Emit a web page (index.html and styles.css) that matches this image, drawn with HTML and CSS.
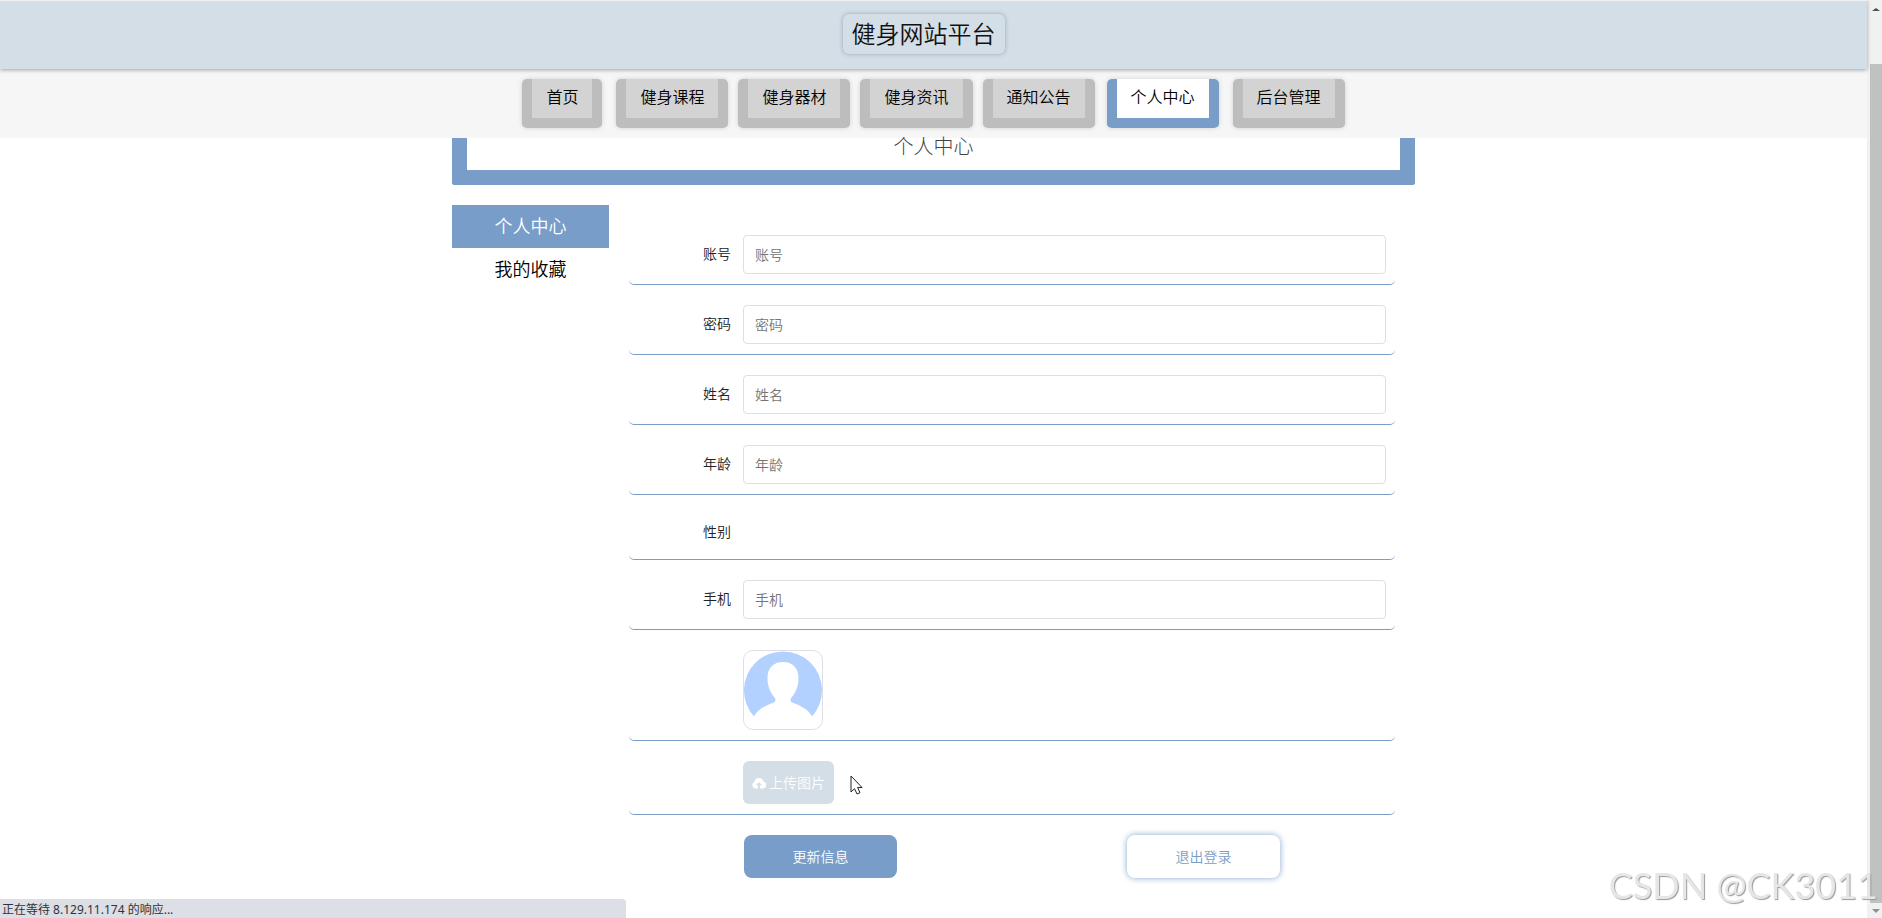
FILE: index.html
```
<!DOCTYPE html>
<html lang="zh-CN">
<head>
    <meta charset="UTF-8">
    <meta name="viewport" content="width=device-width, initial-scale=1.0">
    <title>个人中心</title>
    <link rel="stylesheet" href="styles.css">
</head>
<body>
    <div class="page">
        <header class="header">
            <h1 class="logo">健身网站平台</h1>
        </header>
        <nav class="nav">
            <a class="nav-item first" href="#">首页</a>
            <a class="nav-item" href="#">健身课程</a>
            <a class="nav-item" href="#">健身器材</a>
            <a class="nav-item" href="#">健身资讯</a>
            <a class="nav-item" href="#">通知公告</a>
            <a class="nav-item active" href="#">个人中心</a>
            <a class="nav-item" href="#">后台管理</a>
        </nav>

        <main class="container">
            <h2 class="banner">个人中心</h2>
            <div class="center">
                <div class="side">
                    <a class="side-item active" href="#">个人中心</a>
                    <a class="side-item" href="#">我的收藏</a>
                </div>
                <form class="form">
                    <div class="row">
                        <label class="label" for="account">账号</label>
                        <input class="input" type="text" id="account" placeholder="账号">
                    </div>
                    <div class="row">
                        <label class="label" for="password">密码</label>
                        <input class="input" type="password" id="password" placeholder="密码">
                    </div>
                    <div class="row">
                        <label class="label" for="name">姓名</label>
                        <input class="input" type="text" id="name" placeholder="姓名">
                    </div>
                    <div class="row">
                        <label class="label" for="age">年龄</label>
                        <input class="input" type="text" id="age" placeholder="年龄">
                    </div>
                    <div class="row row-gender">
                        <span class="label">性别</span>
                    </div>
                    <div class="row">
                        <label class="label" for="phone">手机</label>
                        <input class="input" type="text" id="phone" placeholder="手机">
                    </div>
                    <div class="row">
                        <span class="label"></span>
                        <div class="avatar">
                            <svg viewBox="0 0 78 78" width="78" height="78">
                                <path fill="#b3d1ff" d="M10 65.500A39 39 0 1 1 68 65.500C64 58 56 54.500 49.500 52C46.500 50.800 45.500 49 47.500 46.500C52 41 54.500 35 54.500 27C54.500 17 48.500 11 39 11C29.500 11 23.500 17 23.500 27C23.500 35 26 41 30.500 46.500C32.500 49 31.500 50.800 28.500 52C22 54.500 14 58 10 65.500Z"/>
                            </svg>
                        </div>
                    </div>
                    <div class="row">
                        <span class="label"></span>
                        <button class="upload" type="button">
                            <svg viewBox="0 0 14 12" width="14" height="12">
                                <path fill="#fff" fill-rule="evenodd" d="M3.600 11.500A3.400 3.400 0 0 1 2.300 5A4.700 4.700 0 0 1 11.600 4.800A3.400 3.400 0 0 1 10.500 11.500H8V8.200H10L7 5L4 8.200H6V11.500Z"/>
                            </svg>
                            <span>上传图片</span>
                        </button>
                    </div>
                    <div class="actions">
                        <div class="action"><button class="btn btn-update" type="submit">更新信息</button></div>
                        <div class="action"><button class="btn btn-logout" type="button">退出登录</button></div>
                    </div>
                </form>
            </div>
        </main>
    </div>

    <div class="scrollbar">
        <span class="arrow up"></span>
        <span class="thumb"></span>
        <span class="arrow down"></span>
    </div>

    <div class="status">正在等待 8.129.11.174 的响应...</div>
    <div class="watermark">CSDN @CK3011</div>
    <svg class="cursor" viewBox="0 0 13 20" width="13" height="20">
        <path fill="#fff" stroke="#222" d="M1 1V17L4.500 13.700L7 19L10 17.700L7.600 12.500H12Z"/>
    </svg>
</body>
</html>
```
FILE: styles.css
```
* {
    box-sizing: border-box;
}
body {
    display: flex;
    min-height: 100vh;
    margin: 0;
    background: #fff;
    color: #000;
    font-family: "Noto Sans CJK SC", "Noto Sans", sans-serif;
    font-weight: 350;
}
a {
    color: inherit;
    text-decoration: none;
}
.page {
    flex: 1;
}
.header {
    position: relative;
    display: flex;
    justify-content: center;
    padding: 13px 20px 15px 0;
    border-top: 1px solid #f0f0f0;
    background: #d4dee7;
    box-shadow: 0 1px 4px rgba(0,0,0,0.35);
}
.logo {
    margin: 0;
    padding: 0 9px 2px;
    border-radius: 6px;
    color: #111;
    font-size: 24px;
    font-weight: 350;
    line-height: 38px;
    box-shadow: 0 0 4px rgba(60,80,110,0.4);
}
.nav {
    display: flex;
    justify-content: center;
    gap: 10px;
    padding: 10px 0;
    background: #f6f6f6;
}
.nav-item {
    padding: 0 14px 5px;
    border: 10px solid #bdbdbd;
    border-top: 0;
    border-radius: 5px;
    background: #d3d3d3;
    font-size: 16px;
    line-height: 34px;
    box-shadow: 0 0 5px rgba(0,0,0,0.15);
}
.nav-item.first {
    margin-right: 4px;
}
.nav-item.active {
    margin: 0 4px 0 2px;
    border-color: #789dc8;
    background: #fff;
}
.container {
    max-width: 963px;
    margin: 0 auto;
}
.banner {
    margin: 0 0 20px;
    padding-bottom: 16px;
    border: 15px solid #789dc8;
    border-top: 0;
    border-radius: 0 0 3px 3px;
    color: #444;
    font-size: 20px;
    font-weight: 300;
    line-height: 16px;
    text-align: center;
}
.center {
    display: flex;
}
.side {
    width: 157px;
}
.side-item {
    display: block;
    padding-bottom: 2px;
    font-size: 18px;
    line-height: 41px;
    text-align: center;
}
.side-item.active {
    background: #789dc8;
    color: #fff;
}
.form {
    flex: 1;
    padding: 10px 20px 0;
}
.row {
    display: flex;
    align-items: center;
    margin-top: 20px;
    padding: 0 9px 10px 0;
    border-bottom: 1px solid #789dc8;
    border-radius: 5px;
}
.row-gender {
    min-height: 45px;
}
.label {
    width: 114px;
    padding: 0 12px 3px 0;
    color: #222;
    font-size: 14px;
    line-height: 20px;
    text-align: right;
}
.input {
    flex: 1;
    height: 39px;
    padding: 0 11px 2px;
    border: 1px solid #dcdfe6;
    border-radius: 4px;
    font: inherit;
    font-size: 14px;
}
.input::placeholder {
    color: #757575;
}
.avatar {
    width: 80px;
    height: 80px;
    overflow: hidden;
    border: 1px solid #dce0e6;
    border-radius: 10px;
}
.avatar svg {
    display: block;
}
.upload {
    display: flex;
    align-items: center;
    gap: 3px;
    height: 43px;
    padding: 0 9px;
    border: 0;
    border-radius: 6px;
    background: #d4dee7;
    color: #fff;
    font: inherit;
    font-size: 14px;
}
.upload span {
    padding-bottom: 2px;
}
.actions {
    display: flex;
    margin-top: 20px;
}
.action {
    flex: 1;
    text-align: center;
}
.btn {
    width: 40%;
    height: 43px;
    padding: 0 0 2px;
    border: 0;
    border-radius: 8px;
    font: inherit;
    font-size: 14px;
}
.btn-update {
    background: #789dc8;
    color: #fff;
}
.btn-logout {
    background: #fff;
    color: #789dc8;
    box-shadow: 0 0 6px rgba(120,157,200,0.9);
}

/* browser chrome */
.scrollbar {
    display: flex;
    flex-direction: column;
    align-items: center;
    width: 15px;
    padding: 8px 0 5px 2px;
    background: #f1f1f1;
}
.thumb {
    flex: 1;
    width: 12px;
    margin: 53px 0 6px;
    background: #c1c1c1;
}
.arrow {
    border: 4px solid transparent;
}
.arrow.up {
    border-top: 0;
    border-bottom: 3px solid #505050;
}
.arrow.down {
    border-top: 4px solid #909090;
    border-bottom: 0;
}
.status {
    position: fixed;
    left: 0;
    bottom: 0;
    width: 626px;
    padding: 3px 0 0 2px;
    border-radius: 0 4px 0 0;
    background: #dcdfe5;
    color: #333;
    font-family: "Noto Sans", "Noto Sans CJK SC", sans-serif;
    font-size: 12px;
    font-weight: 400;
    line-height: 16px;
}
.watermark {
    position: fixed;
    right: 4px;
    bottom: 11px;
    color: #e6e6e6;
    font-family: Lato, sans-serif;
    font-size: 36px;
    font-weight: 400;
    line-height: 44px;
    text-shadow: 1px 1px 1px #999;
}
.cursor {
    position: fixed;
    left: 850px;
    top: 775px;
}
```
